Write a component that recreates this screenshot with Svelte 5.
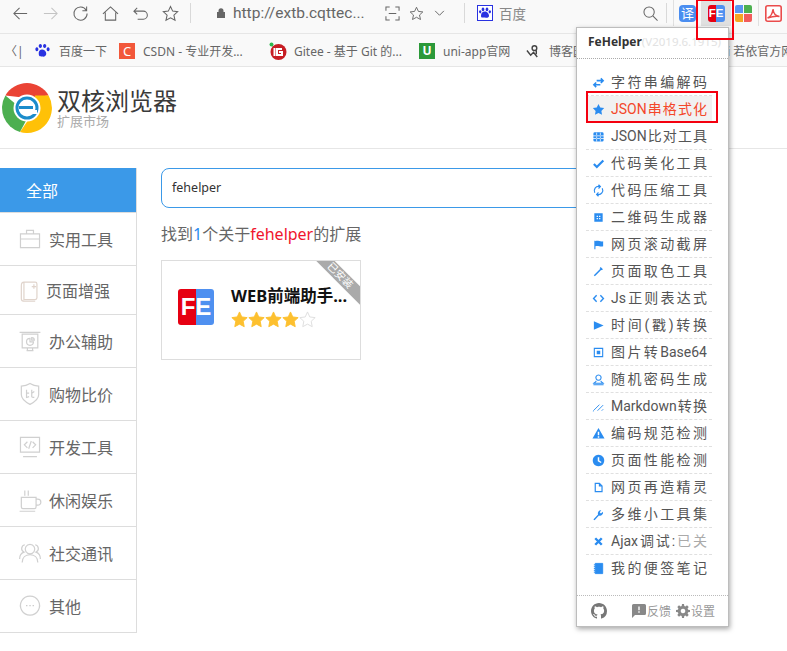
<script>
  const B = '#2a8cf0';
  const menu = [
    { t: '字符串编解码', d: 'M5 5h7M9.500 2.500L12 5 9.500 7.500M9 9.500H2M4.500 7L2 9.500 4.500 12', s: 1.700 },
    { t: 'JSON串格式化', d: 'M7 1l1.900 3.900 4.200.6-3 3 .7 4.200L7 10.700l-3.800 2 .7-4.200-3-3 4.200-.6z', on: 1 },
    { t: 'JSON比对工具', d: 'M3 2.500h8a1.500 1.500 0 0 1 1.500 1.500v7a1.500 1.500 0 0 1-1.500 1.500H3A1.500 1.500 0 0 1 1.500 11V4A1.500 1.500 0 0 1 3 2.500zM1.500 6h11v.8h-11zM1.500 9h11v.8h-11zM4.700 3h.8v9h-.8zM8.500 3h.8v9h-.8z', g: 1 },
    { t: '代码美化工具', d: 'M2 7.500l3.200 3.200L12.200 3.800', s: 2.400 },
    { t: '代码压缩工具', d: 'M3 9.500A4.600 4.600 0 0 1 8 2.800M11 4.500A4.600 4.600 0 0 1 6 11.200M7 .8l2 2-2 2M7 13.200l-2-2 2-2', s: 1.300 },
    { t: '二维码生成器', d: 'M2.500 2.500h9v9h-9zM5 5h1.400v1.400H5zM7.600 7.600H9V9H7.600zM7.600 5H9v1.400H7.600zM5 7.600h1.400V9H5z', g: 1 },
    { t: '网页滚动截屏', d: 'M2.500 3v9h1.200V9c2.500-1.500 5 1 8.300 0V3.500C9 4.500 6 2 3.700 3.500V3z' },
    { t: '页面取色工具', d: 'M2.500 11.500L9.500 4.500M8.800 2.800l2.400 2.400', s: 1.600 },
    { t: 'Js正则表达式', d: 'M5 3.500L1.700 7 5 10.500M9 3.500L12.300 7 9 10.500', s: 1.500 },
    { t: '时间(戳)转换', d: 'M2 2.500L12.500 7 2 11.500z' },
    { t: '图片转Base64', d: 'M2.500 2.500h9v9h-9zM5.700 5.700h1v1h-1zM7.300 7.300h1v1h-1zM7.300 5.700h1v1h-1zM5.700 7.300h1v1h-1z', s: 1.200 },
    { t: '随机密码生成', d: 'M7 2.200a2.800 2.800 0 1 1-.01 0zM4.500 8.500C4 10 3 10 2 11h10c-1-1-2-1-2.500-2.500M1.500 12.600h11', s: 1.200 },
    { t: 'Markdown转换', d: 'M1.500 11.500L8 5M6 11.500L12 5.500M10.500 11.500L12 10M1 12.300h.5', s: 1 },
    { t: '编码规范检测', d: 'M7 1l6.500 11.500H.5zM6.200 5v4h1.600V5zM6.200 10v1.500h1.600V10z', g: 1 },
    { t: '页面性能检测', d: 'M7 .8a6.200 6.200 0 1 1-.01 0zM6.200 3.500V7.800l3.300 2 .8-1.200L7.800 7V3.500z', g: 1 },
    { t: '网页再造精灵', d: 'M3.500 2.500h4.500l2.800 2.800v6.200H3.500zM8 2.500v2.800h2.800', s: 1.300 },
    { t: '多维小工具集', d: 'M1.500 12.500L6.500 7A3.300 3.300 0 0 1 10 2.500L8.300 4.500l1.300 1.300L11.800 4A3.300 3.300 0 0 1 7.500 8L2.800 13.300z' },
    { t: 'Ajax调试:', off: '已关', d: 'M3.500 3.500l7 7M10.500 3.500l-7 7', s: 2.600 },
    { t: '我的便签笔记', d: 'M3.500 1.500h8v11h-8zM2 3h1.500M2 5h1.500M2 7h1.500M2 9h1.500M2 11h1.500', fill: 1 },
  ];
  const cats = [
    { t: '全部', active: 1 },
    { t: '实用工具', i: 'M4 10h22v16H4zM11 10V6h8v4M4 16h22' },
    { t: '页面增强', short: 1, i: 'M8 7h13a2 2 0 0 1 2 2v16a2 2 0 0 1-2 2H8zM8 7C6 7 5 9 5 11v15c0 2 2 3 4 3h12M17 12h5M19.500 9.500v5', warm: 1 },
    { t: '办公辅助', i: 'M3 6h24M6 8h18v16H6zM12 24v3M18 24v3M11 27h8M15 13a4 4 0 1 0 4 4h-4zM17 12a3 3 0 0 1 3 3h-3z' },
    { t: '购物比价', i: 'M5 7c4 0 7-1 10-3 3 2 6 3 10 3v10c0 6-6 9-10 11-4-2-10-5-10-11zM11 11v9l3-1M11 15h3M17 11v8c0 1 1 1 3 1M17 15l3-2' },
    { t: '开发工具', i: 'M4 5h22v17H4zM7 27h16M12 10l-3.500 3.500L12 17M18 10l3.500 3.500L18 17M16.500 9l-3 9' },
    { t: '休闲娱乐', i: 'M5 13h17v11a2 2 0 0 1-2 2H7a2 2 0 0 1-2-2zM22 15h2a3.500 3.500 0 0 1 0 7h-2M3 29h18M9 5v6M13 5v6' },
    { t: '社交通讯', i: 'M15 6a5.500 5.500 0 1 1-.01 0zM6 27c0-6 4-9 9-9s9 3 9 9M9 6.500A4.500 4.500 0 0 0 8 15c-3 1-5 4-5 8M21 6.500A4.500 4.500 0 0 1 22 15c3 1 5 4 5 8' },
    { t: '其他', i: 'M15 4.500a11 11 0 1 1-.01 0z', dots: 1 },
  ];
</script>

<div class="page">
  <header class="toolbar">
    <div class="nav">
      <span class="btn"><svg viewBox="0 0 18 18"><path d="M16 9H2M8 3L2 9l6 6" /></svg></span>
      <span class="btn dim"><svg viewBox="0 0 18 18"><path d="M2 9h14M10 3l6 6-6 6" /></svg></span>
      <span class="btn"><svg viewBox="0 0 18 18"><path d="M15 5.500A7 7 0 1 0 16 9M15.500 1.500v4.500H11" /></svg></span>
      <span class="btn"><svg viewBox="0 0 18 18"><path d="M1 9.500L9 2l8 7.500M3.500 8v8h11V8" /></svg></span>
      <span class="btn"><svg viewBox="0 0 18 18"><path d="M5.500 3L2 6.500 5.500 10M2 6.500h10a4 4 0 0 1 0 8.500H6" /></svg></span>
      <span class="btn"><svg viewBox="0 0 18 18"><path d="M9 1.500l2.300 5 5.300.6-4 3.700 1.200 5.400L9 13.500l-4.800 2.700 1.200-5.400-4-3.700 5.300-.6z" /></svg></span>
    </div>
    <i class="sep"></i>
    <svg class="lock" viewBox="0 0 8 10"><path d="M1.500 4V2.800a2.500 2.500 0 0 1 5 0V4H8v6H0V4z" /></svg>
    <span class="url">http://extb.cqttec...</span>
    <span class="btn cap"><svg viewBox="0 0 16 16"><path class="thin" d="M1 5V1h4M11 1h4v4M15 11v4h-4M5 15H1v-4M4 8h8" /></svg></span>
    <span class="btn star2"><svg viewBox="0 0 18 18"><path d="M9 1.500l2.300 5 5.300.6-4 3.700 1.200 5.400L9 13.500l-4.800 2.700 1.200-5.400-4-3.700 5.300-.6z" /></svg></span>
    <span class="btn chev"><svg viewBox="0 0 12 8"><path class="thin" d="M1 1l5 5 5-5" /></svg></span>
    <i class="sep sep2"></i>
    <svg class="engine" viewBox="0 0 16 16"><rect x=".5" y=".5" width="15" height="15" fill="#fff" stroke="#2932e1"/><path fill="#2932e1" d="M8 6.500c2.200 0 4 2.300 4 4.200S10 13 8 12.500 4 13.500 4 10.700 5.800 6.500 8 6.500zM6 2.500a1.400 1.900 0 1 1-.01 0zM10 2.500a1.400 1.900 0 1 1-.01 0zM3.200 5.200a1.200 1.600 0 1 1-.01 0zM12.800 5.200a1.200 1.600 0 1 1-.01 0z"/></svg>
    <span class="engine-name">百度</span>
    <span class="btn find"><svg viewBox="0 0 16 16"><circle class="thin" cx="6.500" cy="6.500" r="5.500" /><path class="thin" d="M10.500 10.500L15.500 15.500" /></svg></span>
    <i class="sep sep3"></i>
    <div class="exts">
      <span class="ext yi">译</span>
      <span class="ext-on"><span class="fe small"><b>FE</b></span></span>
      <span class="grid4"><i></i><i></i><i></i><i></i></span>
      <svg class="pdf" viewBox="0 0 17 17"><rect x=".8" y=".8" width="15.400" height="15.400" rx="2" fill="#fff" stroke="#ea4c4c" stroke-width="1.600"/><path fill="none" stroke="#ea4c4c" stroke-width="1.500" d="M2.500 13c3-1 5-5 5.500-9 .3 4 3 7 6.500 7.500-4-.5-9 .5-12 1.500z"/></svg>
    </div>
  </header>

  <nav class="marks">
    <span class="fold">〈|</span>
    <svg class="m paw" viewBox="0 0 16 16"><path fill="#2932e1" d="M8 7c2.500 0 4 2.500 4 4.500S10 15 8 14.500 4 15 4 11.500 5.500 7 8 7zM5.700 1a1.700 2.200 0 1 1-.01 0zM10.300 1a1.700 2.200 0 1 1-.01 0zM2 4.500a1.600 2.100 0 1 1-.01 0zM14 4.500a1.600 2.100 0 1 1-.01 0z"/></svg>
    <span class="mt w-bd">百度一下</span>
    <span class="c-logo">C</span>
    <span class="mt w-csdn">CSDN - 专业开发...</span>
    <svg class="m gitee" viewBox="0 0 18 18"><circle cx="9.500" cy="10" r="8" fill="#c71d23"/><circle cx="2.500" cy="2.500" r="2" fill="#2db84d"/><path fill="none" stroke="#fff" stroke-width="2" d="M13 7H8v6h5v-3H10M5.500 6v8"/></svg>
    <span class="mt w-gitee">Gitee - 基于 Git 的...</span>
    <span class="u-logo">U</span>
    <span class="mt w-uni">uni-app官网</span>
    <svg class="m bo" viewBox="0 0 16 16"><path fill="none" stroke="#444" stroke-width="1.500" d="M1 8l4 5 3-3 4 5M9 3a2.500 2.500 0 1 1 0 5 2.500 2.500 0 0 1 0-5zM11 8v4" /></svg>
    <span class="mt w-bo">博客园</span>
    <span class="mt w-ry">i 若依官方网</span>
  </nav>

  <div class="brand">
    <svg class="logo" viewBox="0 0 50 50">
      <path fill="#ea4335" d="M3.400 12.500A25 25 0 0 1 46.600 12.500L25 15z"/>
      <path fill="#4caf50" d="M3.400 12.500A25 25 0 0 0 18 49L27 32z"/>
      <path fill="#ffc107" d="M46.600 12.500A25 25 0 0 1 18 49L33 27V12.500z"/>
      <circle cx="25" cy="25" r="13.500" fill="#fff"/>
      <circle cx="25" cy="25" r="10" fill="none" stroke="#1b8ccb" stroke-width="3"/>
      <path fill="none" stroke="#1b8ccb" stroke-width="3" d="M17 24.500h14"/>
      <path fill="#fff" d="M30 27h5v4h-5z"/>
    </svg>
    <div class="brand-text">
      <div class="brand-name">双核浏览器</div>
      <div class="brand-sub">扩展市场</div>
    </div>
  </div>

  <div class="body">
    <aside class="side">
      {#each cats as c}
        <div class="cat" class:active={c.active} class:short={c.short}>
          {#if c.i}
            <svg class="cat-ic" class:warm={c.warm} viewBox="0 0 30 32"><path d={c.i} />{#if c.dots}<path class="dots" d="M10.500 15.500h1.500M14.300 15.500h1.500M18 15.500h1.500" />{/if}</svg>
          {/if}
          <span>{c.t}</span>
        </div>
      {/each}
    </aside>
    <main class="main">
      <div class="search">fehelper</div>
      <p class="found">找到<em>1</em>个关于<strong>fehelper</strong>的扩展</p>
      <article class="card">
        <span class="fe big"><b>FE</b></span>
        <div class="card-info">
          <div class="card-title">WEB前端助手...</div>
          <div class="stars">
            {#each [1, 1, 1, 1, 0] as s}
              <svg viewBox="0 0 18 18"><path class={s ? 'st on' : 'st'} d="M9 1l2.400 5.300 5.700.7-4.200 3.900 1.100 5.700L9 13.900l-5 2.700 1.100-5.700L.9 7l5.700-.7z" /></svg>
            {/each}
          </div>
        </div>
        <div class="ribbon">已安装</div>
      </article>
    </main>
  </div>

  <section class="popup">
    <div class="pop-head"><b>FeHelper</b><span>(V2019.6.1915)</span></div>
    <ul class="items">
      {#each menu as m}
        <li class:on={m.on}>
          <svg class="mi" viewBox="0 0 14 14"><path d={m.d} fill={m.s ? 'none' : B} fill-rule={m.g ? 'evenodd' : 'nonzero'} stroke={m.s ? B : (m.fill ? B : 'none')} stroke-width={m.s || 1} /></svg>
          <span class="lbl">{m.t}{#if m.off}<span class="off">{m.off}</span>{/if}</span>
        </li>
      {/each}
    </ul>
    <footer class="pop-foot">
      <svg class="gh" viewBox="0 0 16 16"><path d="M8 0C3.580 0 0 3.580 0 8c0 3.540 2.290 6.530 5.470 7.590.4.070.55-.17.55-.38 0-.19-.01-.82-.01-1.490-2.010.37-2.530-.49-2.690-.94-.09-.23-.48-.94-.82-1.130-.28-.15-.68-.52-.01-.53.63-.01 1.080.58 1.230.82.720 1.210 1.870.870 2.330.660.070-.520.280-.870.510-1.070-1.780-.2-3.640-.890-3.640-3.950 0-.870.310-1.590.820-2.150-.08-.2-.36-1.020.08-2.120 0 0 .670-.210 2.200.820.640-.180 1.320-.270 2-.270s1.360.090 2 .270c1.530-1.040 2.200-.820 2.200-.820.440 1.100.160 1.920.080 2.120.510.560.820 1.270.820 2.150 0 3.070-1.870 3.750-3.650 3.950.290.250.540.730.540 1.480 0 1.070-.010 1.930-.010 2.200 0 .210.150.460.550.380A8.010 8.010 0 0 0 16 8c0-4.420-3.580-8-8-8z"/></svg>
      <svg class="fb" viewBox="0 0 14 14"><path fill-rule="evenodd" d="M1.500 0h11A1.500 1.500 0 0 1 14 1.500v8a1.500 1.500 0 0 1-1.500 1.500H3l-3 3V1.500A1.500 1.500 0 0 1 1.500 0zM6.300 2.500v3.800h1.400V2.500zM6.300 7.300v1.400h1.400V7.300z"/></svg>
      <span class="ft">反馈</span>
      <svg class="gear" viewBox="0 0 14 14"><path fill-rule="evenodd" d="M6 0h2l.3 1.900 1.100.5L11 1.300 12.700 3l-1.100 1.600.5 1.100L14 6v2l-1.900.3-.5 1.100 1.100 1.600L11 12.700l-1.600-1.100-1.100.5L8 14H6l-.3-1.900-1.100-.5L3 12.700 1.300 11l1.100-1.600-.5-1.100L0 8V6l1.900-.3.500-1.100L1.300 3 3 1.300l1.600 1.100 1.100-.5zM7 4.700a2.300 2.300 0 1 0 .01 0z"/></svg>
      <span class="ft">设置</span>
    </footer>
  </section>

  <div class="mark mark-ext"></div>
  <div class="mark mark-item"></div>
</div>

<style>
  :global(body) { margin: 0; background: #fff; }
  .page {
    position: relative; width: 787px; height: 651px; overflow: hidden;
    font-family: "Noto Sans", "Noto Sans CJK SC", sans-serif; color: #666;
  }
  svg { display: block; flex: none; }

  .toolbar {
    display: flex; align-items: center; height: 34px; padding: 0 0 7px 5px; box-sizing: border-box;
    background: #f9f9f9; border-bottom: 1px solid #e6e6e6; position: relative;
  }
  .nav { display: flex; }
  .btn { width: 30px; height: 26px; display: flex; align-items: center; justify-content: center; }
  .btn svg { width: 17px; height: 17px; }
  .btn path, .btn circle { fill: none; stroke: #666; stroke-width: 1.100; }
  .btn.dim path { stroke: #c4c4c4; }
  .sep { width: 1px; height: 20px; background: #d9d9d9; margin-left: 5px; flex: none; }
  .lock { width: 8px; height: 10px; margin-left: 26px; fill: #666; }
  .url { font-family: Roboto, sans-serif; font-size: 15.500px; margin-left: 8px; width: 135px; white-space: nowrap; color: #666; }
  .cap { width: 16px; margin-left: 16px; }
  .cap svg { width: 15px; height: 15px; }
  .star2 { width: 16px; margin-left: 8px; }
  .star2 svg { width: 15px; height: 15px; }
  .chev { width: 12px; margin-left: 9px; }
  .chev svg { width: 11px; height: 7px; }
  .sep2 { margin-left: 19px; }
  .engine { width: 16px; height: 16px; margin-left: 12px; }
  .engine-name { font-size: 13.500px; color: #888; margin-left: 6px; width: 29px; white-space: nowrap; }
  .find { width: 16px; margin-left: 114px; }
  .find svg { width: 15px; height: 15px; }
  .sep3 { margin-left: 8px; height: 20px; }
  .exts { display: flex; align-items: center; height: 26px; margin-left: 6px; border-left: 1px solid #e0e0e0; border-right: 1px solid #e0e0e0; width: 84px; position: relative; }
  .ext { width: 17px; height: 17px; border-radius: 4px; background: #4a8df0; color: #fff; font-size: 13px; line-height: 17px; text-align: center; margin-left: 5px; flex: none; }
  .ext-on { width: 30px; height: 26px; background: #e0e0e0; display: flex; align-items: center; justify-content: center; margin-left: 5px; flex: none; }
  .grid4 { display: grid; grid-template-columns: 8px 8px; gap: 1px; margin-left: 4px; flex: none; }
  .grid4 i { height: 8px; }
  .grid4 i:nth-child(1) { background: #5a95f0; border-radius: 2px 0 0 0; }
  .grid4 i:nth-child(2) { background: #4cb050; border-radius: 0 2px 0 0; }
  .grid4 i:nth-child(3) { background: #f5a623; border-radius: 0 0 0 2px; }
  .grid4 i:nth-child(4) { background: #f25c5c; border-radius: 0 0 2px 0; }
  .pdf { width: 17px; height: 17px; position: absolute; left: 91px; top: 5px; }

  .fe {
    display: flex; align-items: center; justify-content: center; flex: none;
    background: linear-gradient(90deg, #e60012 0 50%, #4f90f0 50%); overflow: hidden;
  }
  .fe b { color: #fff; font-family: "Liberation Sans", sans-serif; font-weight: 700; letter-spacing: 0; }
  .fe.small { width: 17px; height: 17px; border-radius: 3px; }
  .fe.small b { font-size: 11.500px; }
  .fe.big { width: 36px; height: 36px; border-radius: 3px; margin-top: 28px; }
  .fe.big b { font-size: 24px; }

  .marks { display: flex; align-items: center; height: 33px; box-sizing: border-box; padding: 1px 0 0 5px; background: #f9f9f9; border-bottom: 1px solid #e6e6e6; white-space: nowrap; overflow: hidden; }
  .fold { font-size: 12px; width: 30px; flex: none; color: #666; }
  .m { flex: none; }
  .paw { width: 15px; height: 15px; }
  .mt { font-size: 12px; color: #666; flex: none; }
  .w-bd { margin-left: 9px; width: 60px; }
  .c-logo { width: 16px; height: 16px; background: #f2573a; color: #fff; font-size: 13px; line-height: 16px; text-align: center; flex: none; }
  .w-csdn { margin-left: 8px; width: 126px; }
  .gitee { width: 18px; height: 18px; }
  .w-gitee { margin-left: 7px; width: 125px; }
  .u-logo { width: 16px; height: 16px; background: #2b9939; color: #fff; font-size: 12px; font-weight: 700; line-height: 16px; text-align: center; flex: none; }
  .w-uni { margin-left: 8px; width: 83px; }
  .bo { width: 15px; height: 15px; }
  .w-bo { margin-left: 8px; width: 178px; }
  .w-ry { color: #666; }

  .brand { border-bottom: 1px solid #e6e6e6; display: flex; padding: 16px 0 0 2px; height: 65px; }
  .logo { width: 50px; height: 50px; }
  .brand-text { margin-left: 5px; }
  .brand-name { font-size: 24px; line-height: 29px; margin-top: 3px; color: #3a3a3a; }
  .brand-sub { font-size: 13px; line-height: 13px; color: #aaa; }

  .body { display: flex; }
  .side { width: 136px; margin-top: 19px; border-right: 1px solid #ddd; flex: none; }
  .cat { height: 52px; border-bottom: 1px solid #ddd; display: flex; align-items: center; font-size: 16px; color: #666; padding-left: 17px; }
  .cat svg { width: 26px; height: 28px; margin-right: 6px; }
  .cat-ic path { fill: none; stroke: #d0d0d0; stroke-width: 1.400; }
  .cat-ic.warm path { stroke: #e0d4cc; }
  .cat-ic .dots { stroke: #c8c8c8; }
  .cat.short { height: 48px; }
  .cat.short svg { margin-right: 3px; }
  .cat.active { height: 44px; background: #3b99e8; color: #fff; padding-left: 26px; }
  .main { padding: 19px 0 0 24px; flex: 1; min-width: 0; }
  .search { width: 500px; height: 40px; box-sizing: border-box; border: 1px solid #3b99e8; border-radius: 8px; padding-left: 10px; font-size: 12.500px; line-height: 38px; color: #333; }
  .found { margin: 14px 0 14px; font-size: 16px; line-height: 24px; color: #666; }
  .found em { font-style: normal; color: #2a8cf0; }
  .found strong { font-weight: 400; color: #f0142d; }
  .card { position: relative; width: 200px; height: 100px; box-sizing: border-box; border: 1px solid #ddd; display: flex; align-items: flex-start; padding-left: 16px; overflow: hidden; }
  .card-info { margin: 24px 0 0 17px; }
  .card-title { font-size: 16.500px; font-weight: 700; line-height: 22px; color: #111; white-space: nowrap; }
  .stars { display: flex; margin-top: 4px; }
  .stars svg { width: 17px; height: 17px; }
  .st { fill: #fff; stroke: #ddd; stroke-width: 1; }
  .st.on { fill: #fdc02f; stroke: #fdc02f; }
  .ribbon { position: absolute; top: 8px; right: -25px; width: 90px; height: 13px; background: #aaa; color: #fff; font-size: 10.500px; line-height: 13px; text-align: center; transform: rotate(45deg); }

  .popup { position: absolute; left: 576px; top: 27px; width: 153px; height: 600px; box-sizing: border-box; background: #fff; border: 1px solid #bdbdbd; box-shadow: 1px 2px 5px rgba(0,0,0,.35); display: flex; flex-direction: column; overflow: hidden; }
  .pop-head { height: 31px; border-bottom: 1px dotted #aaa; padding: 6px 0 0 11px; box-sizing: border-box; font-size: 12px; line-height: 16px; white-space: nowrap; overflow: hidden; }
  .pop-head b { color: #333; font-weight: 700; }
  .pop-head span { color: #e2e2e2; font-size: 11.500px; }
  .items { list-style: none; margin: 10px 0 0 9px; padding: 0; width: 126px; font-family: Roboto, "Noto Sans CJK SC", sans-serif; }
  .items li { height: 26px; border-bottom: 1px dashed #e0e0e0; display: flex; align-items: center; font-size: 14px; color: #555; }
  .items li:last-child { border-bottom: 0; }
  .items li.on { background: #f1f1f1; color: #f4472a; }
  .mi { width: 13px; height: 13px; margin-left: 6px; }
  .lbl { display: block; width: 96px; margin-left: 6px; text-align: justify; text-align-last: justify; white-space: nowrap; line-height: 20px; }
  .off { color: #aaa; }
  .pop-foot { margin-top: auto; height: 30px; border-top: 1px dotted #bbb; display: flex; align-items: center; padding-left: 14px; color: #999; }
  .gh { width: 16px; height: 16px; fill: #777; }
  .fb { width: 14px; height: 14px; fill: #888; margin-left: 25px; }
  .gear { width: 14px; height: 14px; fill: #888; margin-left: 5px; }
  .ft { font-size: 12px; margin-left: 1px; }

  .mark { position: absolute; box-sizing: border-box; border: 2px solid #f4000f; }
  .mark-ext { left: 696px; top: -1px; width: 38px; height: 41px; }
  .mark-item { left: 586px; top: 91px; width: 132px; height: 32px; }
</style>
